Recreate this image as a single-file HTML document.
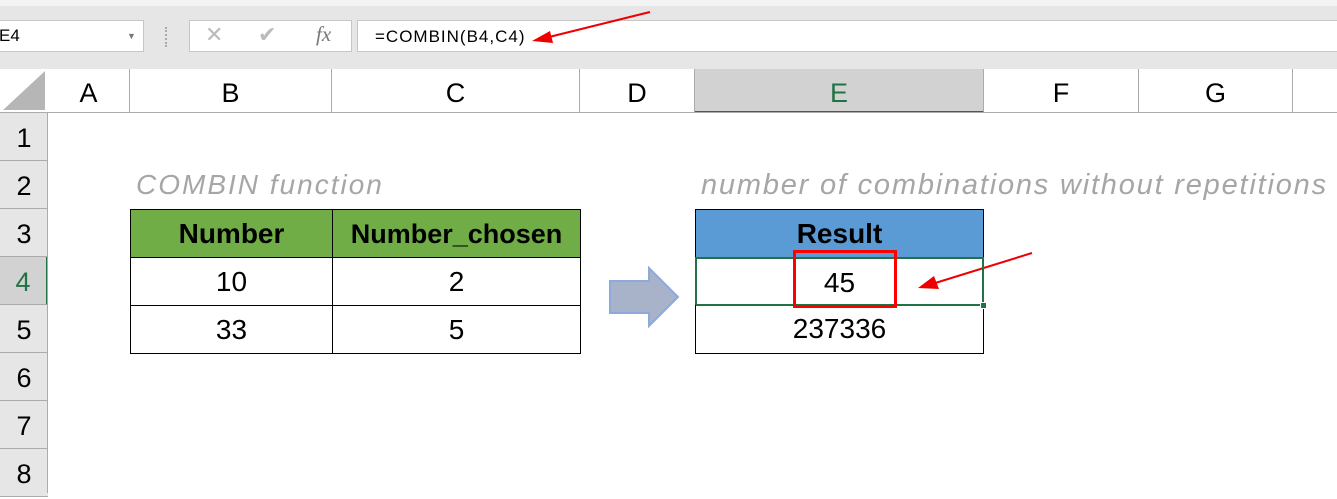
<!DOCTYPE html>
<html><head><style>
body{margin:0;width:1337px;height:493px;overflow:hidden;background:#fff;font-family:"Liberation Sans",sans-serif;position:relative}
.a{position:absolute;box-sizing:border-box}
.ch{position:absolute;top:69px;height:44px;font-size:27px;text-align:center;line-height:48px;border-right:1px solid #ababab;box-sizing:border-box;color:#000}
.rh{position:absolute;left:0;width:48px;height:48px;font-size:27px;text-align:center;line-height:50px;border-bottom:1px solid #ababab;box-sizing:border-box;background:#e6e6e6}
.c{position:absolute;box-sizing:border-box;text-align:center;font-size:28px;line-height:48px;border:1px solid #000}
</style></head><body>
<div class="a" style="left:0;top:0;width:1337px;height:69px;background:#e6e6e6"></div>
<div class="a" style="left:0;top:0;width:1337px;height:6px;background:#f3f3f3"></div>
<div class="a" style="left:-2px;top:20px;width:146px;height:32px;background:#fff;border:1px solid #c6c6c6;font-size:17px;line-height:30px;padding-left:0px">E4<span style="position:absolute;left:128px;font-size:9px;color:#777">▼</span></div>
<div class="a" style="left:165px;top:27px;width:2px;height:20px;border-left:2px dotted #aaa"></div>
<div class="a" style="left:189px;top:20px;width:163px;height:32px;background:#fff;border:1px solid #c6c6c6"></div>
<div class="a" style="left:205px;top:22px;font-size:22px;color:#bbb">✕</div>
<div class="a" style="left:258px;top:22px;font-size:22px;color:#bbb">✔</div>
<div class="a" style="left:316px;top:22px;font-size:21px;color:#777;font-family:'Liberation Serif',serif;font-style:italic">fx</div>
<div class="a" style="left:357px;top:20px;width:990px;height:32px;background:#fff;border:1px solid #c6c6c6;font-size:17px;line-height:31px;padding-left:17px;letter-spacing:1px">=COMBIN(B4,C4)</div>
<svg class="a" style="left:0;top:0" width="1337" height="493">
<line x1="650" y1="12" x2="545" y2="38" stroke="#e00" stroke-width="2"/>
<polygon points="532,41 550,31 553,43" fill="#e00"/>
<line x1="1032" y1="253" x2="932" y2="284" stroke="#e00" stroke-width="2"/>
<polygon points="918,288 934,276 939,289" fill="#e00"/>
<polygon points="3,110 45,71 45,110" fill="#b6b6b6"/>
<polygon points="610,281 649,281 649,268 678,297 649,326 649,313 610,313" fill="#a8b3c9" stroke="#8ea9db" stroke-width="2"/>
</svg>
<div class="ch" style="left:48px;width:82px">A</div>
<div class="ch" style="left:130px;width:202px">B</div>
<div class="ch" style="left:332px;width:248px">C</div>
<div class="ch" style="left:580px;width:115px">D</div>
<div class="ch" style="left:695px;width:289px;background:#d2d2d2;color:#217346;border-bottom:2px solid #217346">E</div>
<div class="ch" style="left:984px;width:155px">F</div>
<div class="ch" style="left:1139px;width:154px">G</div>
<div class="a" style="left:0;top:112px;width:1337px;height:1px;background:#ababab"></div>
<div class="rh" style="top:113px">1</div>
<div class="rh" style="top:161px">2</div>
<div class="rh" style="top:209px">3</div>
<div class="rh" style="top:257px;background:#d2d2d2;color:#217346;border-right:2px solid #217346">4</div>
<div class="rh" style="top:305px">5</div>
<div class="rh" style="top:353px">6</div>
<div class="rh" style="top:401px">7</div>
<div class="rh" style="top:449px">8</div>
<div class="a" style="left:47px;top:113px;width:1px;height:380px;background:#ababab"></div>
<div class="a" style="left:136px;top:169px;font-size:28px;font-style:italic;color:#a6a6a6;letter-spacing:2px">COMBIN function</div>
<div class="a" style="left:701px;top:169px;font-size:29px;font-style:italic;color:#a6a6a6;white-space:nowrap;letter-spacing:1.8px">number of combinations without repetitions</div>
<div class="c" style="left:130px;top:209px;width:203px;height:49px;background:#70ad47;font-weight:bold">Number</div>
<div class="c" style="left:332px;top:209px;width:249px;height:49px;background:#70ad47;font-weight:bold;font-size:27px">Number_chosen</div>
<div class="c" style="left:130px;top:257px;width:203px;height:49px">10</div>
<div class="c" style="left:332px;top:257px;width:249px;height:49px">2</div>
<div class="c" style="left:130px;top:305px;width:203px;height:49px">33</div>
<div class="c" style="left:332px;top:305px;width:249px;height:49px">5</div>
<div class="c" style="left:695px;top:209px;width:289px;height:49px;background:#5b9bd5;font-weight:bold">Result</div>
<div class="c" style="left:695px;top:257px;width:289px;height:49px;border:2px solid #217346">45</div>
<div class="c" style="left:695px;top:305px;width:289px;height:49px;border-top:none">237336</div>
<div class="a" style="left:980px;top:302px;width:7px;height:7px;background:#217346;border:1px solid #fff"></div>
<div class="a" style="left:793px;top:250px;width:104px;height:58px;border:3px solid #f00"></div>
</body></html>
